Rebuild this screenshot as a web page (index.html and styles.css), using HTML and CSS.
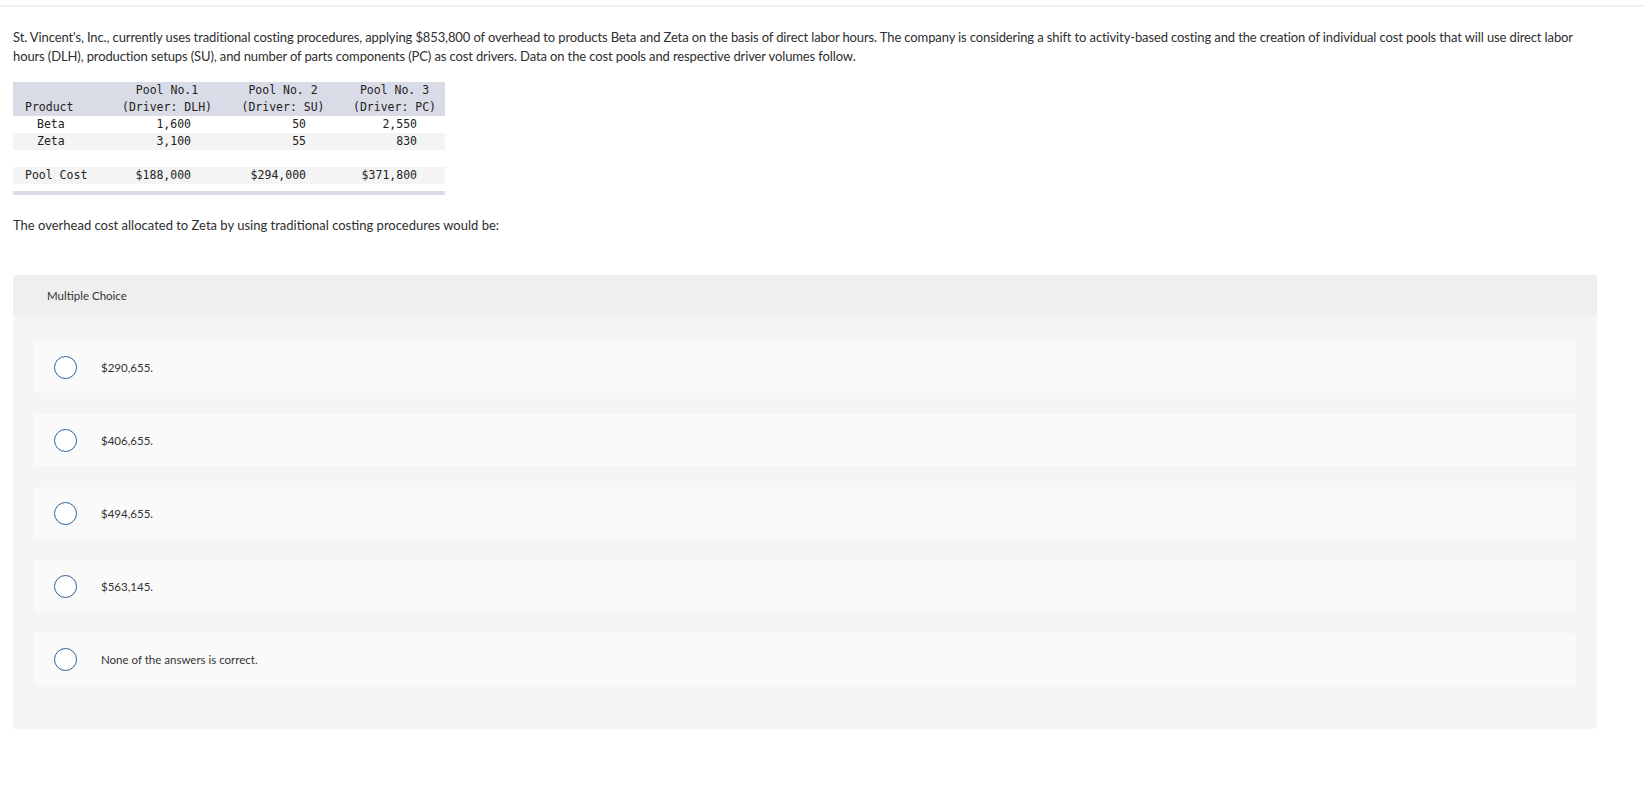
FILE: index.html
```html
<!DOCTYPE html>
<html lang="en">
<head>
<meta charset="utf-8">
<title>Question</title>
<link rel="stylesheet" href="styles.css">
</head>
<body>
<div class="topbar"></div>
<main class="content">
  <p class="intro">St. Vincent's, Inc., currently uses traditional costing procedures, applying $853,800 of overhead to products Beta and Zeta on the basis of direct labor hours. The company is considering a shift to activity-based costing and the creation of individual cost pools that will use direct labor hours (DLH), production setups (SU), and number of parts components (PC) as cost drivers. Data on the cost pools and respective driver volumes follow.</p>

  <table class="data">
    <colgroup>
      <col class="c0"><col class="c1"><col class="c2"><col class="c3">
    </colgroup>
    <thead>
      <tr>
        <th class="lbl">Product</th>
        <th>Pool No.1<br>(Driver: DLH)</th>
        <th>Pool No. 2<br>(Driver: SU)</th>
        <th>Pool No. 3<br>(Driver: PC)</th>
      </tr>
    </thead>
    <tbody>
      <tr>
        <td class="prod">Beta</td><td class="v1">1,600</td><td class="v2">50</td><td class="v3">2,550</td>
      </tr>
      <tr class="shade">
        <td class="prod">Zeta</td><td class="v1">3,100</td><td class="v2">55</td><td class="v3">830</td>
      </tr>
      <tr class="blank"><td colspan="4"></td></tr>
      <tr class="shade">
        <td class="lbl">Pool Cost</td><td class="v1">$188,000</td><td class="v2">$294,000</td><td class="v3">$371,800</td>
      </tr>
      <tr class="gap"><td colspan="4"></td></tr>
      <tr class="bar"><td colspan="4"></td></tr>
    </tbody>
  </table>

  <p class="question">The overhead cost allocated to Zeta by using traditional costing procedures would be:</p>

  <section class="mc">
    <div class="mc-head">Multiple Choice</div>
    <div class="mc-list">
      <div class="option"><span class="radio"></span><span class="opt-text">$290,655.</span></div>
      <div class="option"><span class="radio"></span><span class="opt-text">$406,655.</span></div>
      <div class="option"><span class="radio"></span><span class="opt-text">$494,655.</span></div>
      <div class="option"><span class="radio"></span><span class="opt-text">$563,145.</span></div>
      <div class="option"><span class="radio"></span><span class="opt-text">None of the answers is correct.</span></div>
    </div>
  </section>
</main>
</body>
</html>
```

FILE: styles.css
```css
* { box-sizing: border-box; }

html, body {
  margin: 0;
  padding: 0;
  background: #ffffff;
}

body {
  font-family: "Lato", "Open Sans", "Liberation Sans", sans-serif;
  color: #2e2e2e;
}

.topbar {
  height: 7px;
  border-bottom: 2px solid #f0f0f0;
}

.content {
  padding: 0 48px 40px 13px;
}

.intro {
  margin: 21px 0 0 0;
  font-size: 13px;
  line-height: 19px;
  letter-spacing: -0.12px;
}

.data {
  margin-top: 16px;
  border-collapse: collapse;
  border-spacing: 0;
  table-layout: fixed;
  width: 432px;
  font-family: "DejaVu Sans Mono", "Liberation Mono", monospace;
  font-size: 11.5px;
  line-height: 17px;
  color: #222222;
}

.data .c0 { width: 99px; }
.data .c1 { width: 110px; }
.data .c2 { width: 122px; }
.data .c3 { width: 101px; }

.data th,
.data td {
  padding: 0;
  font-weight: normal;
  white-space: nowrap;
}

.data thead tr {
  background: #d9dce6;
}

.data th {
  text-align: center;
  vertical-align: bottom;
}

.data th.lbl,
.data td.lbl {
  text-align: left;
  padding-left: 12px;
}

.data td.prod {
  text-align: left;
  padding-left: 24px;
}

.data td.v1 { text-align: right; padding-right: 31px; }
.data td.v2 { text-align: right; padding-right: 38px; }
.data td.v3 { text-align: right; padding-right: 28px; }

.data tr.shade { background: #f4f4f4; }

.data tr.blank td { height: 17px; }
.data tr.gap td { height: 7px; }
.data tr.bar td { height: 4px; background: #d9dce6; }

.question {
  margin: 21px 0 0 0;
  font-size: 13px;
  line-height: 19px;
}

.mc {
  margin-top: 40px;
  background: #f5f5f5;
  border-radius: 3px;
}

.mc-head {
  height: 40px;
  display: flex;
  align-items: center;
  padding-left: 34px;
  background: #efefef;
  border-radius: 3px 3px 0 0;
  font-size: 11.5px;
  color: #333333;
}

.mc-list {
  display: flex;
  flex-direction: column;
  gap: 21px;
  padding: 26px 21px 44px 21px;
}

.option {
  height: 52px;
  display: flex;
  align-items: center;
  gap: 24px;
  padding-left: 20px;
  background: #fafafa;
  border-radius: 4px;
}

.radio {
  width: 23px;
  height: 23px;
  flex: none;
  border: 1.5px solid #2f5f93;
  border-radius: 50%;
  background: #ffffff;
}

.opt-text {
  font-size: 11.5px;
  color: #333333;
}
```
